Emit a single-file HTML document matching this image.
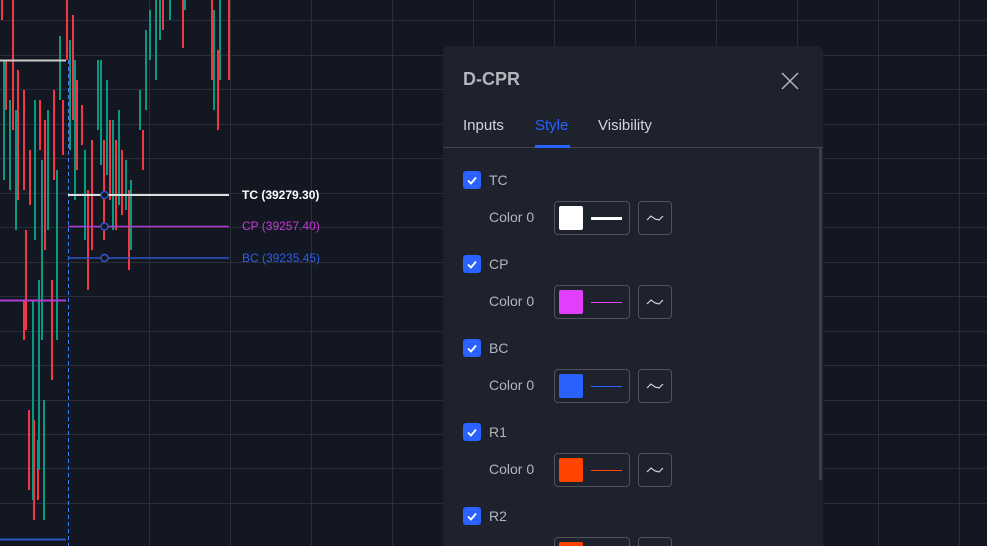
<!DOCTYPE html>
<html style="width:987px;height:546px;overflow:hidden"><head><meta charset="utf-8"><style>
body{margin:0;width:987px;height:546px;background:#131722;overflow:hidden;position:relative;font-family:"Liberation Sans",sans-serif}
svg.c{position:absolute;left:0;top:0}
.p{position:absolute;left:443px;top:46px;width:380px;height:500px;background:#1e222d;border-radius:6px 6px 0 0;overflow:hidden}
.t{position:absolute;color:#b2b5be}
.cb{position:absolute;left:20px;width:18px;height:18px;border-radius:3px;background:#2962ff}
.lb{position:absolute;left:46px;font-size:14px;color:#b2b5be}
.sw{position:absolute;left:111px;width:74px;height:32px;border:1px solid #50535e;border-radius:4px}
.sq{position:absolute;left:4px;top:4px;width:24px;height:24px;border-radius:2px}
.ln{position:absolute;left:36px;width:31px}
.st{position:absolute;left:195px;width:32px;height:32px;border:1px solid #50535e;border-radius:4px}
</style></head><body>
<svg class="c" width="987" height="546">
<g stroke="#2a2e39" stroke-width="1">
<line x1="149.5" y1="0" x2="149.5" y2="546"/><line x1="230.5" y1="0" x2="230.5" y2="546"/><line x1="311.5" y1="0" x2="311.5" y2="546"/><line x1="392.5" y1="0" x2="392.5" y2="546"/><line x1="473.5" y1="0" x2="473.5" y2="546"/><line x1="554.5" y1="0" x2="554.5" y2="546"/><line x1="635.5" y1="0" x2="635.5" y2="546"/><line x1="716.5" y1="0" x2="716.5" y2="546"/><line x1="797.5" y1="0" x2="797.5" y2="546"/><line x1="878.5" y1="0" x2="878.5" y2="546"/><line x1="959.5" y1="0" x2="959.5" y2="546"/>
<line x1="0" y1="20.5" x2="987" y2="20.5"/><line x1="0" y1="55.5" x2="987" y2="55.5"/><line x1="0" y1="89.5" x2="987" y2="89.5"/><line x1="0" y1="124.5" x2="987" y2="124.5"/><line x1="0" y1="158.5" x2="987" y2="158.5"/><line x1="0" y1="193.5" x2="987" y2="193.5"/><line x1="0" y1="227.5" x2="987" y2="227.5"/><line x1="0" y1="262.5" x2="987" y2="262.5"/><line x1="0" y1="296.5" x2="987" y2="296.5"/><line x1="0" y1="331.5" x2="987" y2="331.5"/><line x1="0" y1="365.5" x2="987" y2="365.5"/><line x1="0" y1="400.5" x2="987" y2="400.5"/><line x1="0" y1="434.5" x2="987" y2="434.5"/><line x1="0" y1="468.5" x2="987" y2="468.5"/><line x1="0" y1="503.5" x2="987" y2="503.5"/>
</g>
<g stroke-width="2">
<g stroke="#f23645">
<line x1="2" y1="0" x2="2" y2="20"/><line x1="6" y1="60" x2="6" y2="110"/><line x1="13" y1="0" x2="13" y2="130"/><line x1="18" y1="70" x2="18" y2="200"/><line x1="24" y1="90" x2="24" y2="190"/><line x1="30" y1="150" x2="30" y2="205"/><line x1="40" y1="100" x2="40" y2="150"/><line x1="45" y1="120" x2="45" y2="250"/><line x1="54" y1="90" x2="54" y2="180"/><line x1="63" y1="100" x2="63" y2="155"/><line x1="67" y1="0" x2="67" y2="60"/><line x1="73" y1="15" x2="73" y2="120"/><line x1="77" y1="80" x2="77" y2="170"/><line x1="82" y1="105" x2="82" y2="145"/><line x1="88" y1="190" x2="88" y2="290"/><line x1="92" y1="140" x2="92" y2="250"/><line x1="104" y1="140" x2="104" y2="240"/><line x1="110" y1="120" x2="110" y2="200"/><line x1="116" y1="140" x2="116" y2="230"/><line x1="122" y1="150" x2="122" y2="215"/><line x1="129" y1="190" x2="129" y2="270"/><line x1="143" y1="130" x2="143" y2="170"/><line x1="163" y1="0" x2="163" y2="30"/><line x1="183" y1="0" x2="183" y2="48"/><line x1="212" y1="0" x2="212" y2="80"/><line x1="218" y1="50" x2="218" y2="130"/><line x1="229" y1="0" x2="229" y2="80"/>
<line x1="26" y1="230" x2="26" y2="330"/><line x1="29" y1="410" x2="29" y2="490"/><line x1="34" y1="420" x2="34" y2="520"/><line x1="38" y1="440" x2="38" y2="500"/><line x1="24" y1="300" x2="24" y2="340"/><line x1="52" y1="280" x2="52" y2="380"/>
</g>
<g stroke="#089981">
<line x1="4" y1="60" x2="4" y2="180"/><line x1="10" y1="100" x2="10" y2="190"/><line x1="16" y1="110" x2="16" y2="230"/><line x1="35" y1="100" x2="35" y2="240"/><line x1="42" y1="160" x2="42" y2="340"/><line x1="48" y1="110" x2="48" y2="230"/><line x1="57" y1="170" x2="57" y2="340"/><line x1="60" y1="36" x2="60" y2="100"/><line x1="70" y1="40" x2="70" y2="150"/><line x1="75" y1="60" x2="75" y2="200"/><line x1="85" y1="150" x2="85" y2="240"/><line x1="98" y1="60" x2="98" y2="130"/><line x1="101" y1="60" x2="101" y2="165"/><line x1="107" y1="80" x2="107" y2="175"/><line x1="113" y1="120" x2="113" y2="230"/><line x1="119" y1="110" x2="119" y2="205"/><line x1="126" y1="160" x2="126" y2="210"/><line x1="131" y1="180" x2="131" y2="250"/><line x1="140" y1="90" x2="140" y2="130"/><line x1="146" y1="30" x2="146" y2="110"/><line x1="150" y1="10" x2="150" y2="60"/><line x1="156" y1="0" x2="156" y2="80"/><line x1="160" y1="0" x2="160" y2="40"/><line x1="170" y1="0" x2="170" y2="20"/><line x1="185" y1="0" x2="185" y2="10"/><line x1="214" y1="10" x2="214" y2="110"/><line x1="220" y1="0" x2="220" y2="80"/>
<line x1="33" y1="300" x2="33" y2="500"/><line x1="39" y1="280" x2="39" y2="470"/><line x1="44" y1="400" x2="44" y2="520"/>
</g></g>
<line x1="0" y1="60.5" x2="66" y2="60.5" stroke="#ccc" stroke-width="2"/>
<line x1="0" y1="300.5" x2="66" y2="300.5" stroke="#b13ad0" stroke-width="2"/>
<line x1="0" y1="539.5" x2="66" y2="539.5" stroke="#2d56c8" stroke-width="2"/>
<line x1="68.5" y1="60" x2="68.5" y2="546" stroke="#3d7bff" stroke-dasharray="4,3"/>
<line x1="68" y1="195" x2="229" y2="195" stroke="#ddd" stroke-width="2"/>
<line x1="68" y1="226.5" x2="229" y2="226.5" stroke="#b13ad0" stroke-width="1.5"/>
<line x1="68" y1="258" x2="229" y2="258" stroke="#2d56c8" stroke-width="1.5"/>
<g fill="#131722" stroke="#2d56c8" stroke-width="1.5"><circle cx="104.5" cy="195" r="3.5"/><circle cx="104.5" cy="226.5" r="3.5"/><circle cx="104.5" cy="258" r="3.5"/></g>
<g font-size="12" font-family="Liberation Sans,sans-serif"><text x="242" y="199" fill="#ffffff" font-weight="bold">TC (39279.30)</text><text x="242" y="230" fill="#c83ad8">CP (39257.40)</text><text x="242" y="262" fill="#2d5ee8">BC (39235.45)</text></g>
</svg>
<div class="p">
<div class="t" style="left:20px;top:23px;font-size:18px;font-weight:bold">D-CPR</div>
<svg style="position:absolute;left:338px;top:26px" width="18" height="18"><path d="M1 1L17 17M17 1L1 17" stroke="#b2b5be" stroke-width="1.5"/></svg>
<div class="t" style="left:20px;top:71px;font-size:15px;color:#d1d4dc">Inputs</div>
<div class="t" style="left:92px;top:71px;font-size:15px;color:#2962ff">Style</div>
<div class="t" style="left:155px;top:71px;font-size:15px;color:#d1d4dc">Visibility</div>
<div style="position:absolute;left:0;top:101px;width:380px;height:1px;background:#434651"></div>
<div style="position:absolute;left:92px;top:99px;width:35px;height:3px;background:#2962ff"></div>
<div style="position:absolute;left:376px;top:102px;width:3px;height:332px;background:#3a3e4a"></div>
<div id="rows"></div>
</div>
<script>
var d=[["TC","#ffffff",3],["CP","#e040fb",1],["BC","#2962ff",1],["R1","#ff4500",1],["R2","#ff4500",1]],h="";
d.forEach(function(r,i){var y=125+i*84;
h+='<div class="cb" style="top:'+y+'px"><svg width="18" height="18"><path d="M5 9.5l3 3 5-6" fill="none" stroke="#fff" stroke-width="1.8"/></svg></div>';
h+='<div class="lb" style="top:'+(y+1)+'px">'+r[0]+'</div>';
h+='<div class="lb" style="top:'+(y+38)+'px">Color 0</div>';
h+='<div class="sw" style="top:'+(y+30)+'px"><div class="sq" style="background:'+r[1]+'"></div><div class="ln" style="top:'+(16-r[2]/2)+'px;height:'+r[2]+'px;background:'+r[1]+'"></div></div>';
h+='<div class="st" style="top:'+(y+30)+'px"><svg width="32" height="32"><path d="M8 18l4-4 4 3 4 1 4-4" fill="none" stroke="#d1d4dc" stroke-width="1.2"/></svg></div>';});
document.getElementById("rows").innerHTML=h;
</script>
</body></html>
